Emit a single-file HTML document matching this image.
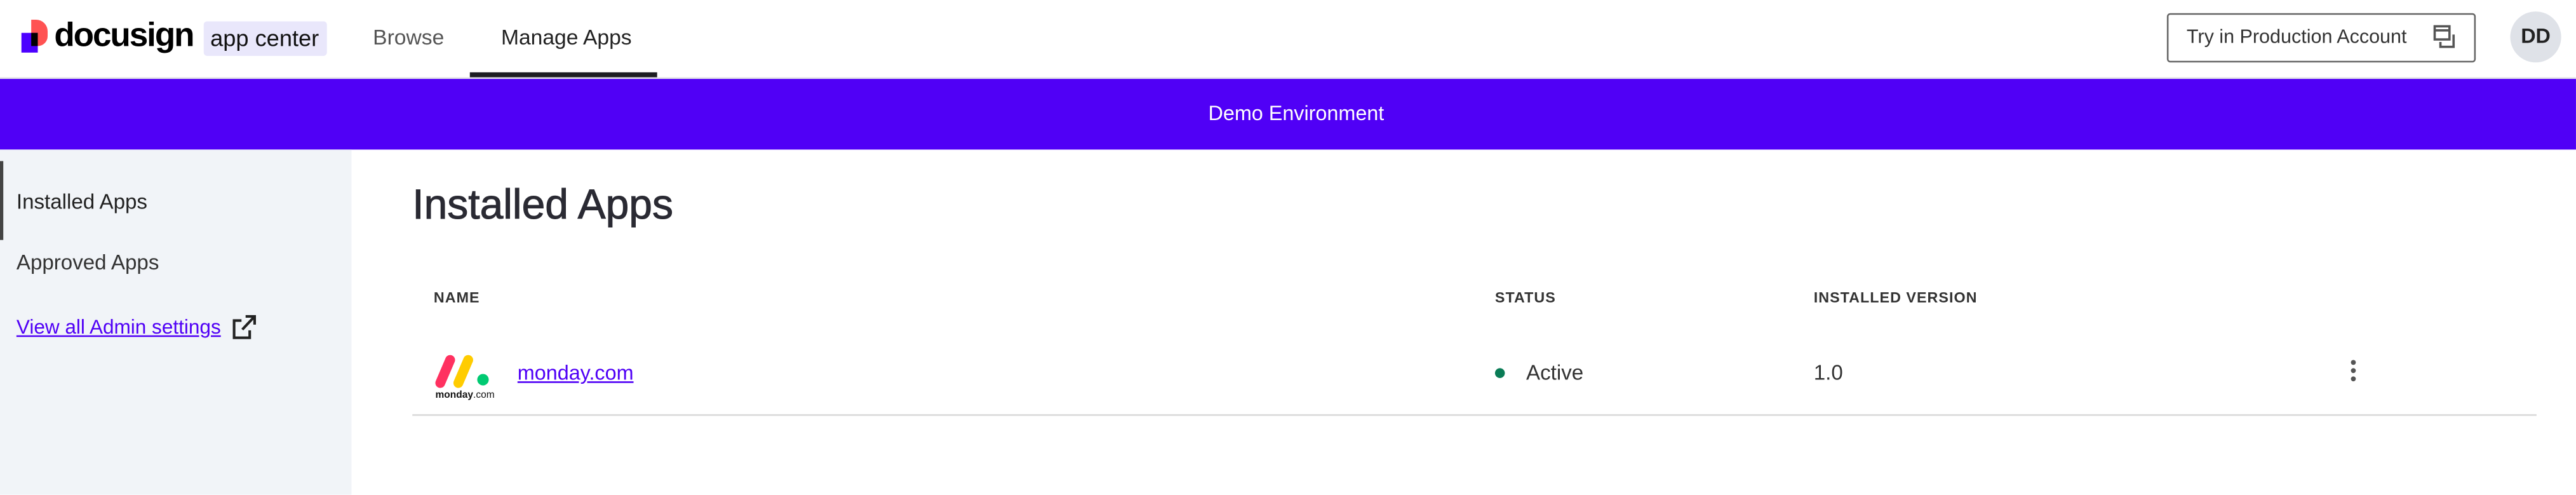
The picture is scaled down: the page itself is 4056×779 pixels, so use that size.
<!DOCTYPE html>
<html><head><meta charset="utf-8"><style>
html,body{margin:0;padding:0;width:4056px;height:778px;overflow:hidden;background:#fff}
#w{position:absolute;left:0;top:0;width:1568px;height:301px;transform:scale(2.5867);transform-origin:0 0;font-family:"Liberation Sans",sans-serif;color:#222}
.a{position:absolute;white-space:nowrap}
</style></head><body><div id="w">
<!-- header -->
<div class="a" style="left:0;top:0;width:1568px;height:47px;background:#fff;border-bottom:1px solid #e2e2e6"></div>
<svg class="a" style="left:13px;top:11px" width="18" height="22" viewBox="0 0 18 22">
<path d="M6 1h3a7 7 0 0 1 7 7v3a6 6 0 0 1-6 6H6z" fill="#ff5252"/>
<rect x="0" y="9" width="10" height="12" fill="#4c00ff"/>
<rect x="6" y="9" width="4" height="8" fill="#000"/>
</svg>
<div class="a" style="left:33px;top:10px;font-size:20.5px;font-weight:bold;letter-spacing:-0.8px;color:#000">docusign</div>
<div class="a" style="left:124px;top:13px;width:75px;height:21px;background:#e9e7fb;border-radius:2px"></div>
<div class="a" style="left:128px;top:15px;font-size:14px;color:#111">app center</div>
<div class="a" style="left:227px;top:15px;font-size:13px;color:#555">Browse</div>
<div class="a" style="left:305px;top:15px;font-size:13px;color:#222;font-weight:500">Manage Apps</div>
<div class="a" style="left:286px;top:44px;width:114px;height:3px;background:#1d1d22"></div>
<div class="a" style="left:1319px;top:8px;width:186px;height:28px;border:1px solid #666;border-radius:2px"></div>
<div class="a" style="left:1331px;top:15px;font-size:11.8px;color:#333">Try in Production Account</div>
<svg class="a" style="left:1481px;top:15px" width="15" height="15" viewBox="0 0 15 15" fill="none" stroke="#555" stroke-width="1.4">
<rect x="1" y="1" width="9" height="8"/><line x1="1" y1="3.5" x2="10" y2="3.5"/><path d="M12.5 6v7.5H4.5v-3"/></svg>
<div class="a" style="left:1528px;top:7px;width:31px;height:31px;border-radius:50%;background:#dfe2e8"></div>
<div class="a" style="left:1528px;top:15px;width:31px;text-align:center;font-size:12.5px;font-weight:bold;color:#222">DD</div>
<!-- banner -->
<div class="a" style="left:0;top:48px;width:1568px;height:43px;background:#5000f6"></div>
<div class="a" style="left:0;top:62px;width:1578px;text-align:center;font-size:12.5px;color:#fff">Demo Environment</div>
<!-- sidebar -->
<div class="a" style="left:0;top:91px;width:214px;height:210px;background:#f1f4f8"></div>
<div class="a" style="left:0;top:98px;width:2px;height:48px;background:#444"></div>
<div class="a" style="left:10px;top:115px;font-size:12.8px;color:#222">Installed Apps</div>
<div class="a" style="left:10px;top:152px;font-size:12.8px;color:#333">Approved Apps</div>
<div class="a" style="left:10px;top:192px;font-size:12.2px;color:#5000f6;text-decoration:underline">View all Admin settings</div>
<svg class="a" style="left:141px;top:191px" width="15" height="16" viewBox="0 0 15 16" fill="none" stroke="#222" stroke-width="1.6">
<path d="M6 4H1.5v10.5H11V10"/><path d="M6.5 9.5L13.5 2M8.5 1.5h5.5v5"/></svg>
<!-- main -->
<div class="a" style="left:251px;top:111px;font-size:25.5px;color:#2a2a33;-webkit-text-stroke:0.4px #2a2a33">Installed Apps</div>
<div class="a" style="left:264px;top:176px;font-size:9px;font-weight:bold;color:#333;letter-spacing:0.4px">NAME</div>
<div class="a" style="left:910px;top:176px;font-size:9px;font-weight:bold;color:#333;letter-spacing:0.4px">STATUS</div>
<div class="a" style="left:1104px;top:176px;font-size:9px;font-weight:bold;color:#333;letter-spacing:0.4px">INSTALLED VERSION</div>
<svg class="a" style="left:264px;top:215px" width="36" height="24" viewBox="0 0 36 24">
<line x1="4" y1="18" x2="10" y2="4" stroke="#ff3160" stroke-width="6" stroke-linecap="round"/>
<line x1="15" y1="18" x2="21" y2="4" stroke="#ffcc00" stroke-width="6" stroke-linecap="round"/>
<circle cx="30" cy="16" r="3.5" fill="#00ca72"/></svg>
<div class="a" style="left:265px;top:238px;font-size:6px;font-weight:bold;color:#111">monday<span style="font-weight:normal">.com</span></div>
<div class="a" style="left:315px;top:220px;font-size:12.5px;color:#5000f6;text-decoration:underline">monday.com</div>
<div class="a" style="left:910px;top:224px;width:6px;height:6px;border-radius:50%;background:#0a7c56"></div>
<div class="a" style="left:929px;top:219px;font-size:12.8px;color:#333">Active</div>
<div class="a" style="left:1104px;top:219px;font-size:12.8px;color:#333">1.0</div>
<div class="a" style="left:1431px;top:219px;width:3px;height:3px;border-radius:50%;background:#555;box-shadow:0 5px 0 #555,0 10px 0 #555"></div>
<div class="a" style="left:251px;top:252px;width:1293px;height:1px;background:#d9d9d9"></div>
</div></body></html>
